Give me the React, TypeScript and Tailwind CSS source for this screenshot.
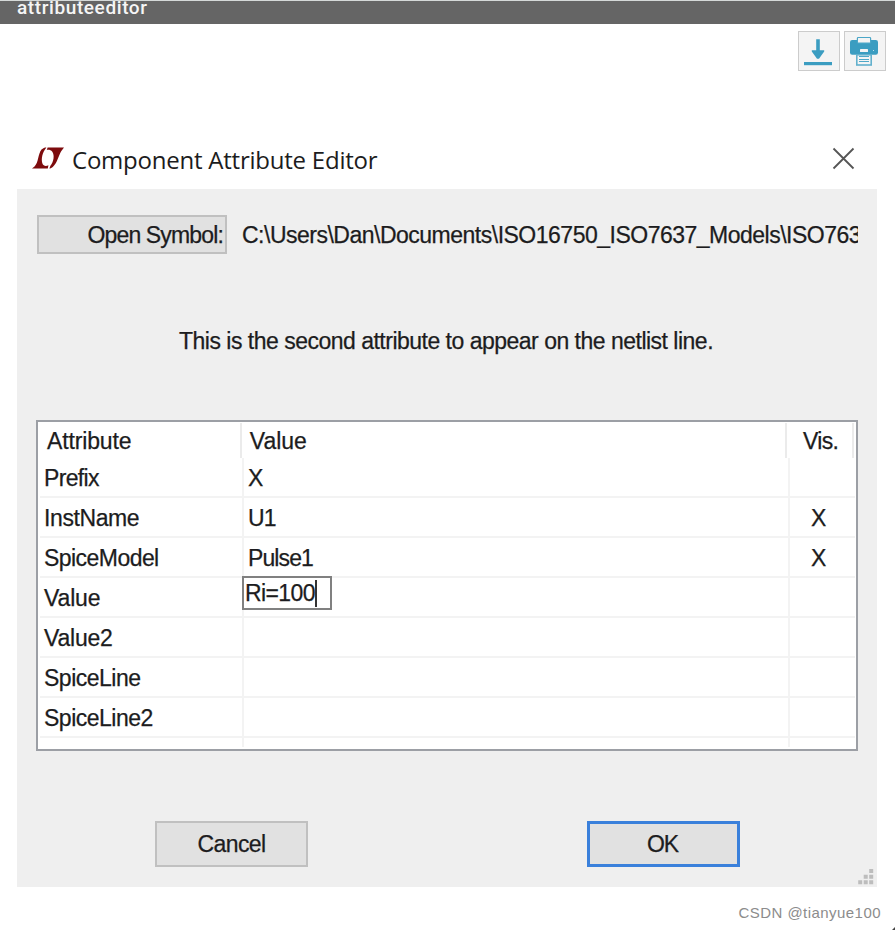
const rows = [
  { name: "Prefix", value: "X", vis: "", ls: "tracking-[-0.65px]" },
  { name: "InstName", value: "U1", vis: "X", ls: "tracking-[-0.4px]" },
  { name: "SpiceModel", value: "Pulse1", vis: "X", ls: "tracking-[-0.55px]" },
  { name: "Value", value: "", vis: "", ls: "tracking-[-0.15px]", editing: true },
  { name: "Value2", value: "", vis: "", ls: "tracking-[-0.2px]" },
  { name: "SpiceLine", value: "", vis: "", ls: "tracking-[-0.5px]" },
  { name: "SpiceLine2", value: "", vis: "", ls: "tracking-[-0.5px]" },
];

function DownloadIcon() {
  return (
    <svg width="40" height="38" viewBox="0 0 40 38" fill="#3b9dc1">
      <path d="M17.2 7.2h3.6v11h4.4v1.2l-5.2 7.4h-2l-5.2-7.4v-1.2h4.4z" />
      <rect x="5" y="30" width="28" height="3.2" />
    </svg>
  );
}

function PrintIcon() {
  return (
    <svg width="40" height="38" viewBox="0 0 40 38">
      <rect x="5" y="8" width="28" height="14.8" rx="2.2" fill="#3b9dc1" />
      <rect x="12.4" y="5.5" width="13.2" height="5.6" rx="0.8" fill="#f4f4f4" stroke="#4ba6c7" strokeWidth="1.2" />
      <rect x="15" y="17" width="8" height="3" rx="0.6" fill="#f4f4f4" />
      <rect x="28" y="18" width="1" height="1" fill="#bfe0ec" />
      <rect x="11.8" y="22.8" width="14.4" height="10.2" fill="#f4f4f4" stroke="#63b1cd" strokeWidth="1.6" />
      <path d="M14 24.5h10M14 27.5h10M14 29.5h10" stroke="#4fa8c8" />
    </svg>
  );
}

function AppLogo() {
  return (
    <svg width="33" height="23" viewBox="0 0 33 23" fill="#7d0b0d" className="shrink-0">
      <path d="M0 21.5 L2.5 19.5 C6.5 16 6 7 9.5 2.6 C11 .9 12.6 .4 14.4 .4 L13 2.6 C9.8 7 8.9 14 10.9 17.6 C12.2 19.4 14.8 19.1 16.4 18.2 L15.8 21.5 Z" />
      <path d="M14.8 2.9 L15.6 .4 L32 .4 L29.2 4.2 C26.5 8.5 25.4 15.5 21 19.8 C19.8 21 18.4 21.6 17.4 21.6 L18.4 18.8 C21.6 14.5 22.8 8.6 20.3 4.7 C19 2.9 16.6 2.5 14.8 2.9 Z" />
    </svg>
  );
}

function ResizeGrip() {
  return (
    <svg width="16" height="16" viewBox="0 0 16 16" fill="#bdbdbd">
      <path d="M11.2 0h4v4h-4zM5.7 5.7h4v4h-4zM11.2 5.7h4v4h-4zM.2 11.2h4v4h-4zM5.7 11.2h4v4h-4zM11.2 11.2h4v4h-4z" />
    </svg>
  );
}

export default function App() {
  return (
    <div className="relative flex h-[930px] w-[895px] flex-col overflow-hidden bg-white font-['Liberation_Sans',Arial,sans-serif] text-[23px] leading-[26px] text-[#1c1c20]">
      <header className="flex h-6 shrink-0 items-start overflow-hidden border-t border-[#d5d9d8] bg-[#656565] pl-[17px]">
        <h1 className="-mt-[5px] font-['Roboto',sans-serif] text-[19px] leading-6 font-medium tracking-[0.6px] text-[#f5f5f5]">
          attributeeditor
        </h1>
      </header>

      <div className="mt-[7px] flex h-10 shrink-0 justify-end gap-1 pr-[9px]">
        <button className="h-10 w-[42px] border border-[#cccccc] bg-[#f4f4f4]"><DownloadIcon /></button>
        <button className="h-10 w-[42px] border border-[#cccccc] bg-[#f4f4f4]"><PrintIcon /></button>
      </div>

      <section className="mt-[58px] ml-[17px] flex w-[860px] shrink-0 flex-col">
        <div className="flex h-[60px] shrink-0 items-center pr-[22px] pb-[2px] pl-[15px]">
          <AppLogo />
          <h2 className="mt-[3px] ml-[7px] grow font-['Open_Sans',sans-serif] text-[24px] leading-8 tracking-[-0.23px] whitespace-nowrap">
            Component Attribute Editor
          </h2>
          <svg width="23" height="23" viewBox="0 0 23 23" stroke="#555" strokeWidth="1.8">
            <path d="M1.5 1.5l20 20M21.5 1.5l-20 20" />
          </svg>
        </div>

        <div className="flex h-[698px] flex-col bg-[#efefef] [-webkit-text-stroke:0.25px_#1c1c20]">
          <div className="mt-[26px] flex h-[39px] shrink-0 items-center pl-5">
            <button className="h-[39px] w-[190px] shrink-0 border-2 border-[#c0c0c0] bg-[#e1e1e1] pr-[2px] text-right tracking-[-0.85px] whitespace-nowrap">
              Open Symbol:
            </button>
            <div className="ml-[15px] w-[616px] overflow-hidden tracking-[-0.5px] whitespace-nowrap">
              C:\Users\Dan\Documents\ISO16750_ISO7637_Models\ISO763
            </div>
          </div>

          <p className="mt-[74px] pl-[162px] tracking-[-0.505px] whitespace-nowrap">
            This is the second attribute to appear on the netlist line.
          </p>

          <div className="mt-[66px] ml-[19px] flex h-[331px] w-[822px] shrink-0 flex-col overflow-hidden border-2 border-[#9c9fa5] bg-white px-[2px]">
            <div className="flex h-[36px] shrink-0 pt-[1px]">
              <div className="w-[202px] border-r-2 border-[#ebebeb] pt-[5px] pl-[7px] tracking-[-0.15px]">Attribute</div>
              <div className="w-[546px] border-r-2 border-[#ebebeb] pt-[5px] pl-[8px]">Value</div>
              <div className="w-[67px] border-r-2 border-[#ebebeb] pt-[5px] pl-[16px] tracking-[-0.7px]">Vis.</div>
            </div>
            {rows.map((row) => (
              <div key={row.name} className="flex h-10 w-[815px] shrink-0 border-b-2 border-[#f3f3f3]">
                <div className={"w-[204px] border-r-2 border-[#f3f3f3] pt-[7px] pl-1 " + row.ls}>{row.name}</div>
                <div className="relative w-[546px] border-r-2 border-[#f3f3f3] pt-[7px] pl-1 tracking-[-0.9px]">
                  {row.value}
                  {row.editing && (
                    <div className="absolute -top-[2px] -left-[2px] flex h-[34px] w-[90px] items-center border-2 border-[#808080] bg-white pl-[1px] tracking-[-0.6px]">
                      Ri=100
                      <span className="h-[27px] w-[2px] bg-[#333]" />
                    </div>
                  )}
                </div>
                <div className="w-[65px] pt-[7px] pl-[21px]">{row.vis}</div>
              </div>
            ))}
            <div className="flex h-[9px]">
              <div className="w-[204px] border-r-2 border-[#f3f3f3]" />
              <div className="w-[546px] border-r-2 border-[#f3f3f3]" />
            </div>
          </div>

          <div className="mt-[70px] flex shrink-0 pl-[138px]">
            <button className="h-[46px] w-[153px] border-2 border-[#c0c0c0] bg-[#e1e1e1] tracking-[-0.6px]">Cancel</button>
            <button className="ml-[279px] h-[46px] w-[153px] border-3 border-[#3a80db] bg-[#e1e1e1] pr-[2px] tracking-[-1px]">OK</button>
          </div>
          <div className="mt-[2px] flex justify-end pr-[3px]">
            <ResizeGrip />
          </div>
        </div>
      </section>

      <footer className="mt-[16px] flex justify-end pr-[14px] text-[15px] leading-5 tracking-[0.45px] text-[#8c8c8c]">
        CSDN @tianyue100
      </footer>
      <svg className="absolute right-0 bottom-0" width="3" height="3" viewBox="0 0 3 3" fill="#444">
        <path d="M3 0v3H0z" />
      </svg>
    </div>
  );
}
